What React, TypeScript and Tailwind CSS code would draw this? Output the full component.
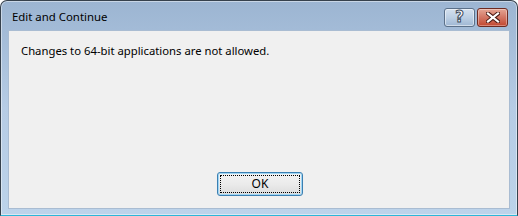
import React from "react";

export default function App() {
  return (
    <div className="w-[518px] h-[216px] bg-white" style={{ fontFamily: '"Noto Sans", "Open Sans", Arial, sans-serif' }}>
      <div className="w-[518px] h-[216px] flex flex-col rounded-t-[7px] border border-[#36414d] border-b-[#2bb6d8] bg-gradient-to-b from-[#9cb5d2] via-[#b6cce5] to-[#bcd3ea] shadow-[inset_0_0_0_1px_rgba(255,255,255,0.45)]">
        <div className="h-[29px] flex items-start shrink-0">
          <div className="pl-[11px] pt-[8px] text-[11.4px] leading-[16px] text-black">Edit and Continue</div>
          <div className="ml-auto mr-[9px] mt-[7px] flex gap-[2px]">
            <div className="w-[31px] h-[19px] rounded-[3px] border border-[#5b7089] bg-gradient-to-b from-[#d4e0ee] via-[#bccfe4] to-[#9fb7d3] shadow-[inset_0_0_0_1px_rgba(255,255,255,0.5)] flex items-center justify-center">
              <span
                className="text-[15px] font-bold leading-none text-white"
                style={{ WebkitTextStroke: "1px #3f4c5c", fontFamily: '"DejaVu Sans", sans-serif' }}
              >
                ?
              </span>
            </div>
            <div className="w-[31px] h-[19px] rounded-[3px] border border-[#6d2b22] bg-gradient-to-b from-[#e4a594] via-[#d27563] to-[#c2462f] shadow-[inset_0_0_0_1px_rgba(255,255,255,0.35)] flex items-center justify-center">
              <svg width="14" height="11" viewBox="0 0 14 11">
                <path
                  d="M2 1.5 L12 9.5 M12 1.5 L2 9.5"
                  stroke="#4a1a14"
                  strokeWidth="4.2"
                  strokeLinecap="square"
                />
                <path
                  d="M2 1.5 L12 9.5 M12 1.5 L2 9.5"
                  stroke="#ffffff"
                  strokeWidth="2.2"
                  strokeLinecap="square"
                />
              </svg>
            </div>
          </div>
        </div>
        <div className="flex-1 mx-[7px] mb-[6px] bg-[#f0f0f0] border border-[#a9bcd2] flex flex-col">
          <div className="pl-[12px] pt-[12px] text-[11.3px] leading-[16px] text-black">
            Changes to 64-bit applications are not allowed.
          </div>
          <div className="mt-auto mb-[12px] flex justify-center">
            <div className="ml-[2px] w-[86px] h-[24px] rounded-[3px] border border-[#3c7fb1] bg-gradient-to-b from-[#f3f3f3] via-[#ebebeb] to-[#dcdcdc] shadow-[inset_0_0_0_1px_#9fd6f5] p-[2px]">
              <div className="w-full h-full border border-dotted border-black flex items-center justify-center text-[12px] leading-none text-black">
                OK
              </div>
            </div>
          </div>
        </div>
      </div>
    </div>
  );
}
